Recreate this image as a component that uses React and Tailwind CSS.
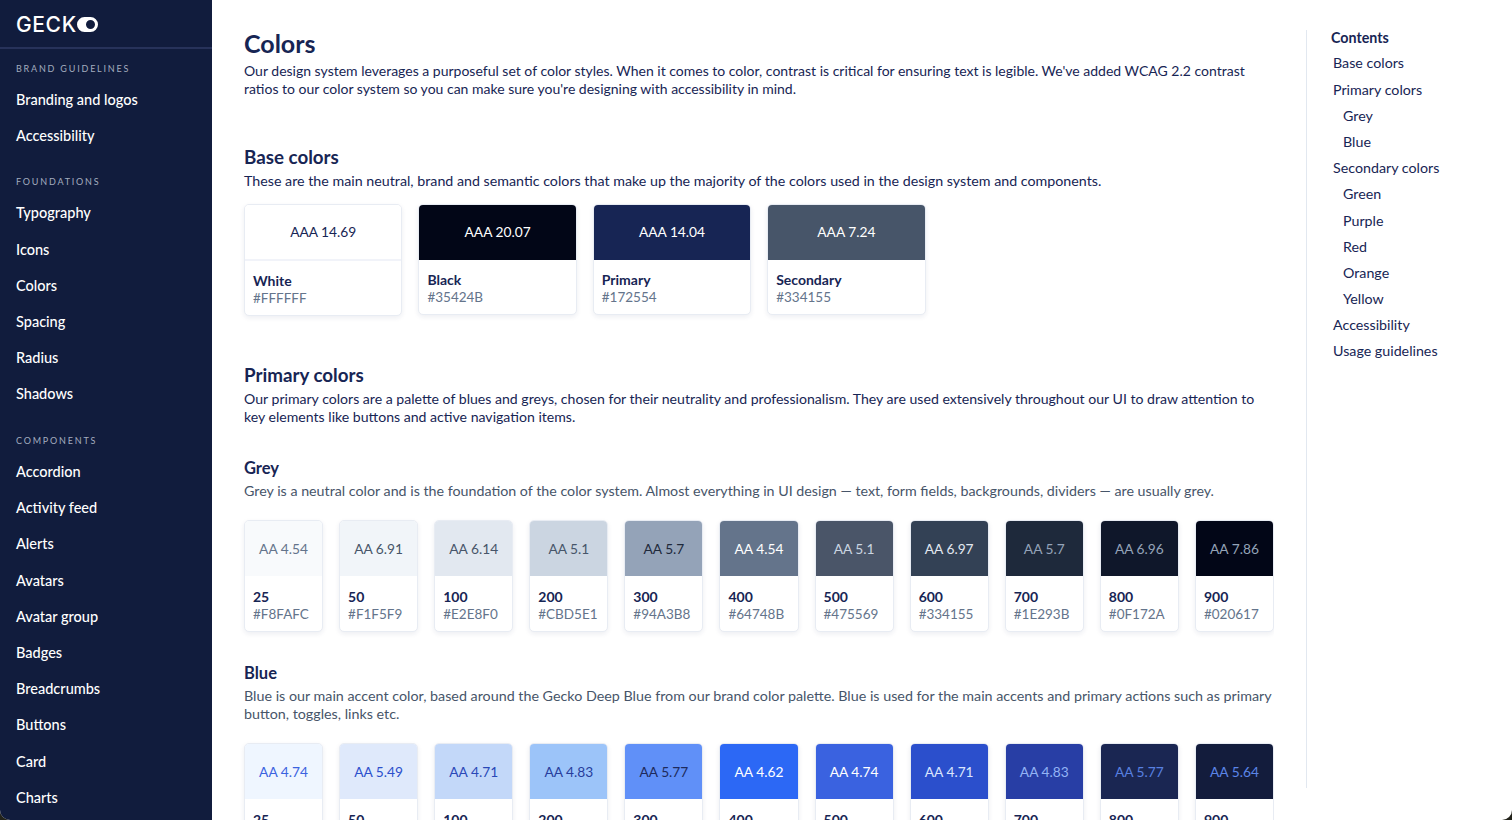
const SIDEBAR = [
  { title: 'BRAND GUIDELINES', titleGap: 'mb-[5.4px]', groupGap: 'mb-[21.5px]', items: ['Branding and logos', 'Accessibility'] },
  { title: 'FOUNDATIONS', titleGap: 'mb-[6px]', groupGap: 'mb-[21.5px]', items: ['Typography', 'Icons', 'Colors', 'Spacing', 'Radius', 'Shadows'] },
  { title: 'COMPONENTS', titleGap: 'mb-[6px]', groupGap: 'mb-[21px]', items: ['Accordion', 'Activity feed', 'Alerts', 'Avatars', 'Avatar group', 'Badges', 'Breadcrumbs', 'Buttons', 'Card', 'Charts'] },
];

const CONTENTS = [
  ['Base colors', false], ['Primary colors', false], ['Grey', true], ['Blue', true],
  ['Secondary colors', false], ['Green', true], ['Purple', true], ['Red', true],
  ['Orange', true], ['Yellow', true], ['Accessibility', false], ['Usage guidelines', false],
];

const BASE = [
  { label: 'AAA 14.69', name: 'White', hex: '#FFFFFF', bg: 'bg-white h-[56px] border-b-2 border-[#f1f3f9]', fg: 'text-[#172554]' },
  { label: 'AAA 20.07', name: 'Black', hex: '#35424B', bg: 'bg-[#020617] h-[55px]', fg: 'text-white' },
  { label: 'AAA 14.04', name: 'Primary', hex: '#172554', bg: 'bg-[#172554] h-[55px]', fg: 'text-white' },
  { label: 'AAA 7.24', name: 'Secondary', hex: '#334155', bg: 'bg-[#475569] h-[55px]', fg: 'text-white' },
];

const GREY = [
  { label: 'AA 4.54', name: '25', hex: '#F8FAFC', bg: 'bg-[#f8fafc]', fg: 'text-[#64748b]' },
  { label: 'AA 6.91', name: '50', hex: '#F1F5F9', bg: 'bg-[#f1f5f9]', fg: 'text-[#475569]' },
  { label: 'AA 6.14', name: '100', hex: '#E2E8F0', bg: 'bg-[#e2e8f0]', fg: 'text-[#475569]' },
  { label: 'AA 5.1', name: '200', hex: '#CBD5E1', bg: 'bg-[#cbd5e1]', fg: 'text-[#475569]' },
  { label: 'AA 5.7', name: '300', hex: '#94A3B8', bg: 'bg-[#94a3b8]', fg: 'text-[#1e293b]' },
  { label: 'AA 4.54', name: '400', hex: '#64748B', bg: 'bg-[#64748b]', fg: 'text-white' },
  { label: 'AA 5.1', name: '500', hex: '#475569', bg: 'bg-[#4a5568]', fg: 'text-[#cbd5e1]' },
  { label: 'AA 6.97', name: '600', hex: '#334155', bg: 'bg-[#334155]', fg: 'text-[#e2e8f0]' },
  { label: 'AA 5.7', name: '700', hex: '#1E293B', bg: 'bg-[#1e293b]', fg: 'text-[#94a3b8]' },
  { label: 'AA 6.96', name: '800', hex: '#0F172A', bg: 'bg-[#0f172a]', fg: 'text-[#94a3b8]' },
  { label: 'AA 7.86', name: '900', hex: '#020617', bg: 'bg-[#020617]', fg: 'text-[#94a3b8]' },
];

const BLUE = [
  { label: 'AA 4.74', name: '25', hex: '#EFF6FF', bg: 'bg-[#eff6ff]', fg: 'text-[#3b63e0]' },
  { label: 'AA 5.49', name: '50', hex: '#DFE9FB', bg: 'bg-[#dfe9fb]', fg: 'text-[#2b4fcc]' },
  { label: 'AA 4.71', name: '100', hex: '#C3D8F9', bg: 'bg-[#c3d8f9]', fg: 'text-[#2a48b8]' },
  { label: 'AA 4.83', name: '200', hex: '#9CC4F9', bg: 'bg-[#9cc4f9]', fg: 'text-[#273d9c]' },
  { label: 'AA 5.77', name: '300', hex: '#6090F8', bg: 'bg-[#6090f8]', fg: 'text-[#1e2a5c]' },
  { label: 'AA 4.62', name: '400', hex: '#2C68F5', bg: 'bg-[#2c68f5]', fg: 'text-white' },
  { label: 'AA 4.74', name: '500', hex: '#3A62E0', bg: 'bg-[#3a62e0]', fg: 'text-white' },
  { label: 'AA 4.71', name: '600', hex: '#2B4FCC', bg: 'bg-[#2b4fcc]', fg: 'text-[#dbe6fd]' },
  { label: 'AA 4.83', name: '700', hex: '#283EA5', bg: 'bg-[#283ea5]', fg: 'text-[#93b4f5]' },
  { label: 'AA 5.77', name: '800', hex: '#1A2652', bg: 'bg-[#1a2652]', fg: 'text-[#5880e0]' },
  { label: 'AA 5.64', name: '900', hex: '#131C3C', bg: 'bg-[#131c3c]', fg: 'text-[#5b85e8]' },
];

function Swatch({ s, base }) {
  return (
    <div className="min-w-0 rounded-[5px] bg-white border border-[#e8ecf3] shadow-[0_2px_5px_rgba(23,37,84,0.08)] overflow-hidden">
      <div className={`flex items-center justify-center text-[13.75px] ${base ? '' : 'h-[55px] pt-px'} ${s.bg} ${s.fg}`}>
        {s.label}
      </div>
      <div className={`px-2 ${base ? 'pt-[11px]' : 'pt-[12px]'} pb-2 text-sm leading-[17px]`}>
        <div className="font-bold text-[#172554]">{s.name}</div>
        <div className="mt-px text-[13.5px] text-[#64748b]">{s.hex}</div>
      </div>
    </div>
  );
}

export default function App() {
  return (
    <div className="h-[820px] overflow-hidden bg-[#23231b] font-['Lato','Liberation_Sans',sans-serif]">
      <div className="h-[820px] flex overflow-hidden rounded-b-[10px] bg-white text-[#172554]">
        <aside className="w-[212px] shrink-0 bg-[#111c3d] text-white">
          <div className="h-[49px] border-b-2 border-[#27325a] px-4 pt-px flex items-center">
            <span className="flex items-center font-['Inter',sans-serif] text-[21px] font-medium leading-none tracking-[0.03em]">
              GECK
              <svg width="21" height="15" viewBox="0 0 21 15">
                <path fill="#fff" fillRule="evenodd" d="M7.5 0h6a7.5 7.5 0 0 1 0 15h-6a7.5 7.5 0 0 1 0-15Zm6 3a4.5 4.5 0 0 0 0 9 4.5 4.5 0 0 0 0-9Z" />
              </svg>
            </span>
          </div>
          <nav className="px-4 pt-[13px]">
            {SIDEBAR.map((g) => (
              <div key={g.title} className={g.groupGap}>
                <div className={`text-[9px] leading-[14px] tracking-[0.2em] text-[#a3acbf] ${g.titleGap}`}>{g.title}</div>
                {g.items.map((item) => (
                  <div key={item} className="h-[36.2px] flex items-center text-[14.5px] font-medium">{item}</div>
                ))}
              </div>
            ))}
          </nav>
        </aside>

        <main className="w-[1062px] shrink-0 pl-8 pt-[27px] overflow-hidden">
          <h1 className="text-[25px] leading-[32px] font-bold">Colors</h1>
          <p className="text-sm leading-[18px] mt-[3px]">
            Our design system leverages a purposeful set of color styles. When it comes to color, contrast is critical for ensuring text is legible. We've added WCAG 2.2 contrast ratios to our color system so you can make sure you're designing with accessibility in mind.
          </p>

          <h2 className="text-[18.75px] leading-[24px] font-bold mt-[47px]">Base colors</h2>
          <p className="text-[14.25px] leading-[18px] mt-[3px]">
            These are the main neutral, brand and semantic colors that make up the majority of the colors used in the design system and components.
          </p>
          <div className="flex items-start gap-4 mt-[14px]">
            {BASE.map((s) => (
              <div key={s.name} className="w-[158.4px]"><Swatch s={s} base /></div>
            ))}
          </div>

          <h2 className="text-[18.75px] leading-[24px] font-bold mt-[47px]">Primary colors</h2>
          <p className="text-[14.1px] leading-[18px] mt-[3px]">
            Our primary colors are a palette of blues and greys, chosen for their neutrality and professionalism. They are used extensively throughout our UI to draw attention to key elements like buttons and active navigation items.
          </p>

          <h3 className="text-[16.5px] leading-[22px] font-bold mt-[31px]">Grey</h3>
          <p className="text-[14.25px] leading-[18px] mt-[3px] text-[#475569]">
            Grey is a neutral color and is the foundation of the color system. Almost everything in UI design — text, form fields, backgrounds, dividers — are usually grey.
          </p>
          <div className="grid grid-cols-11 gap-4 mt-[20px]">
            {GREY.map((s) => <Swatch key={s.name} s={s} />)}
          </div>

          <h3 className="text-[16.5px] leading-[22px] font-bold mt-[30px]">Blue</h3>
          <p className="text-[14.3px] leading-[18px] mt-[3px] text-[#475569]">
            Blue is our main accent color, based around the Gecko Deep Blue from our brand color palette. Blue is used for the main accents and primary actions such as primary button, toggles, links etc.
          </p>
          <div className="grid grid-cols-11 gap-4 mt-[20px]">
            {BLUE.map((s) => <Swatch key={s.name} s={s} />)}
          </div>
        </main>

        <div className="pl-8 pt-[30px]">
          <div className="h-[758px] border-l border-[#e2e8f0] pl-6">
            <div className="text-[14.25px] leading-[15px] font-bold">Contents</div>
            <div className="mt-[5px]">
              {CONTENTS.map(([label, nested]) => (
                <div key={label + nested} className={`h-[26.2px] flex items-center text-[14.25px] ${nested ? 'pl-3' : 'pl-0.5'}`}>{label}</div>
              ))}
            </div>
          </div>
        </div>
      </div>
    </div>
  );
}
